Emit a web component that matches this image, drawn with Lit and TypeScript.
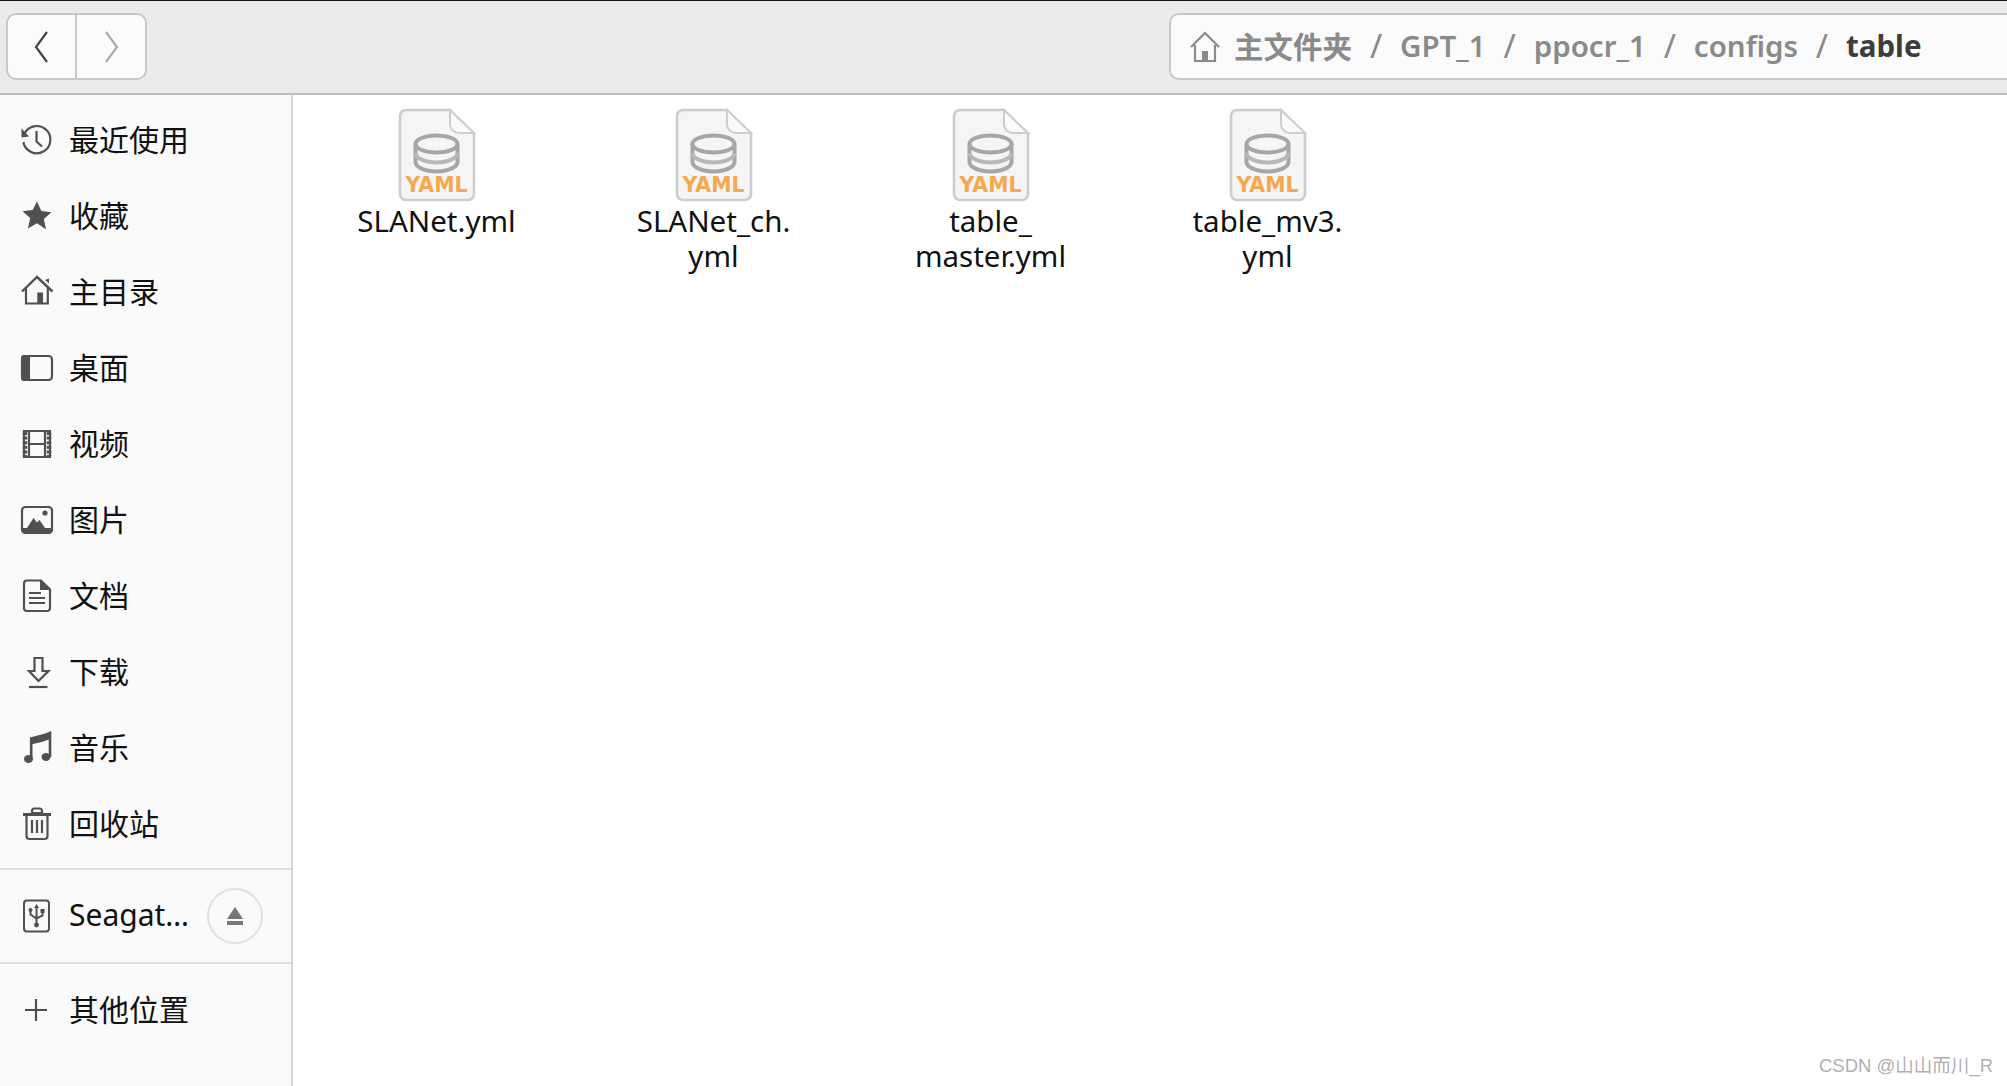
import { LitElement, html, css, svg } from "lit";
import { customElement } from "lit/decorators.js";

const C = "#505050";
const icons: Record<string, unknown> = {
  clock: svg`<path d="M5.2 12.500A13.600 13.600 0 1 1 4.400 20" fill="none" stroke="${C}" stroke-width="2.200"/><path d="M2.500 6.500 L10 14.500 L2.500 15.500Z" fill="${C}"/><path d="M17.500 9V19.500L23 24.500" fill="none" stroke="${C}" stroke-width="2.200"/>`,
  star: svg`<path d="M18 3.500l4.300 9.600 10.200 1.100-7.700 6.900 2.300 10.300L18 25.200 8.900 30.400l2.300-10.300-7.700-6.900 10.200-1.100z" fill="${C}"/>`,
  home: svg`<path d="M3 17.500L18 3l15.500 14.500" fill="none" stroke="${C}" stroke-width="2.400"/><path d="M7 14v15.500h21.800V14" fill="none" stroke="${C}" stroke-width="2.200"/><path d="M18.300 30V18.500h5.700V30z" fill="${C}"/><path d="M26 6l4-1.500v5z" fill="${C}"/>`,
  desk: svg`<rect x="3" y="6" width="30" height="24" rx="3.500" fill="none" stroke="${C}" stroke-width="2.200"/><path d="M5 5h6v26H5a3 3 0 0 1-3-3V8a3 3 0 0 1 3-3z" fill="${C}"/>`,
  video: svg`<path d="M5 5h26v26H5z" fill="none" stroke="${C}" stroke-width="2.200"/><path d="M10 5v26M26 5v26M10 18h16" fill="none" stroke="${C}" stroke-width="2.200"/><path d="M6 6v24M30 6v24" stroke="${C}" stroke-width="4.500" stroke-dasharray="3 1.600" fill="none"/>`,
  pic: svg`<rect x="3" y="5" width="30" height="26" rx="3.500" fill="none" stroke="${C}" stroke-width="2.200"/><path d="M4 26h28v3a3 3 0 0 1-3 3H7a3 3 0 0 1-3-3z" fill="${C}"/><path d="M8 26l6.500-10 3.500 4.500 2.500-2.500 5.500 8z" fill="${C}"/><circle cx="26" cy="11" r="2.600" fill="${C}"/>`,
  doc: svg`<path d="M8 2.500h14l9 9V30a3 3 0 0 1-3 3H8a3 3 0 0 1-3-3V5.500a3 3 0 0 1 3-3z" fill="none" stroke="${C}" stroke-width="2.200"/><path d="M21 2v10h10z" fill="${C}"/><path d="M10 15h12M10 20h16M10 25h16" stroke="${C}" stroke-width="2.200"/>`,
  down: svg`<path d="M15.500 4h8v13h6L19.500 27 10 17h5.500z" fill="none" stroke="${C}" stroke-width="2.200"/><path d="M10 33h18.500" stroke="${C}" stroke-width="2.200"/>`,
  music: svg`<ellipse cx="9.500" cy="29" rx="4.500" ry="4" fill="${C}"/><ellipse cx="27" cy="27" rx="4.500" ry="4" fill="${C}"/><path d="M12.200 29V8.500C19 7 25 5.500 31 3v24" fill="none" stroke="${C}" stroke-width="2.600"/><path d="M12 8.500C19 7 25 5.500 31 3v6c-6 2.500-12 4-19 5.500z" fill="${C}"/>`,
  trash: svg`<path d="M4 8.500h28" stroke="${C}" stroke-width="3"/><path d="M13 7V5a2.500 2.500 0 0 1 2.500-2.500h5A2.500 2.500 0 0 1 23 5v2z" fill="none" stroke="${C}" stroke-width="2.200"/><path d="M7.500 9v21a3 3 0 0 0 3 3h15a3 3 0 0 0 3-3V9" fill="none" stroke="${C}" stroke-width="2.200"/><path d="M13 14v13M18 14v13M23 14v13" stroke="${C}" stroke-width="2.200"/>`,
  usb: svg`<rect x="5" y="2.500" width="25" height="31" rx="3" fill="none" stroke="${C}" stroke-width="2"/><path d="M17.500 8v19M11.500 12v4.500l6 4 6-3V13" fill="none" stroke="${C}" stroke-width="2"/><circle cx="17.500" cy="27" r="2.400" fill="${C}"/><path d="M17.500 6l-2.500 4h5z" fill="${C}"/><circle cx="11.500" cy="12" r="2" fill="${C}"/><rect x="21.500" y="11" width="4" height="4" fill="${C}"/>`,
  plus: svg`<path d="M17 7v22M6 18h22" stroke="${C}" stroke-width="2.200"/>`,
};

const places: [string, string][] = [
  ["clock", "最近使用"], ["star", "收藏"], ["home", "主目录"], ["desk", "桌面"], ["video", "视频"],
  ["pic", "图片"], ["doc", "文档"], ["down", "下载"], ["music", "音乐"], ["trash", "回收站"],
];
const files = ["SLANet.yml", "SLANet_ch.\nyml", "table_\nmaster.yml", "table_mv3.\nyml"];
const crumbs = ["GPT_1", "ppocr_1", "configs"];

const icon = (n: string) => html`<svg class="ic" viewBox="0 0 36 36" width="36" height="36">${icons[n]}</svg>`;

const fileIcon = html`<svg class="file" viewBox="0 0 80 98" width="80" height="98">
  <path d="M9 6h44l24 24v60a6 6 0 0 1-6 6H9a6 6 0 0 1-6-6V12a6 6 0 0 1 6-6z" fill="#f5f5f5" stroke="#cdcdcd" stroke-width="2.600"/>
  <path d="M53 6v14a9 9 0 0 0 9 9h15z" fill="#fafafa" stroke="#cdcdcd" stroke-width="2"/>
  <g fill="none" stroke="#a6a6a6" stroke-width="4">
    <ellipse cx="39.500" cy="40" rx="21" ry="8.500"/>
    <path d="M18.500 40v18c0 5 9.500 9.500 21 9.500s21-4.500 21-9.500V40"/>
    <path d="M18.500 49c0 5 9.500 9.500 21 9.500s21-4.500 21-9.500" stroke="#b8b8b8"/>
  </g>
  <text class="yaml" x="39.500" y="88" text-anchor="middle" textLength="62" lengthAdjust="spacingAndGlyphs">YAML</text>
</svg>`;

@customElement("app-root")
export class AppRoot extends LitElement {
  static styles = css`
    :host { display: block; width: 2007px; height: 1086px; overflow: hidden; background: #fff;
      font-family: "Noto Sans", "Noto Sans CJK SC", sans-serif; color: #111; }
    .win { display: flex; flex-direction: column; height: 100%; border-top: 1px solid #111; box-sizing: border-box; }
    header { flex: none; height: 94px; box-sizing: border-box; background: #ebebeb; border-bottom: 2px solid #bebebe;
      display: flex; align-items: flex-start; padding: 12px 0 0 6px; }
    .nav { display: flex; width: 141px; height: 67px; box-sizing: border-box; border: 2px solid #c8c8c8; border-radius: 10px;
      background: #fbfbfb; overflow: hidden; flex: none; }
    .nav div { display: flex; align-items: center; justify-content: center; flex: 1; }
    .nav div + div { border-left: 2px solid #c8c8c8; padding-left: 2px; }
    .nav div:first-child { flex: none; width: 67px; }
    .path { margin-left: 1022px; flex: 1; height: 67px; box-sizing: border-box; border: 2px solid #c8c8c8; border-right: none;
      border-radius: 10px 0 0 10px; background: #fbfbfb; display: flex; align-items: center; padding: 0 0 2px 16px;
      font-size: 29.500px; font-weight: 600; color: #8a8a8a; }
    .path svg { flex: none; margin-right: 11px; }
    .sep { font-weight: 400; font-size: 33px; width: 72px; text-align: center; flex: none; margin: 0 -12px; }
    .cur { color: #3c3c3c; font-weight: 700; }
    .body { flex: 1; display: flex; min-height: 0; }
    aside { flex: none; width: 293px; box-sizing: border-box; background: #fafafa; border-right: 2px solid #d6d6d6; padding-top: 7px; }
    .row { height: 76px; display: flex; align-items: center; padding-left: 19px; font-size: 30px; gap: 14px; }
    .row .txt { padding-bottom: 5px; }
    .ic { flex: none; }
    hr { margin: 6px 0 0; border: 0; height: 2px; background: #e0e0e0; }
    .dev { height: 92px; justify-content: flex-start; }
    .dev .txt { flex: 1; padding-bottom: 3px; }
    .eject { flex: none; width: 56px; height: 56px; box-sizing: border-box; border-radius: 50%; border: 2px solid #e0e0e0;
      margin-right: 28px; display: flex; align-items: center; justify-content: center; }
    .other { margin-top: 8px; }
    .grid { flex: 1; display: grid; grid-template-columns: repeat(auto-fill, 277px); grid-auto-rows: min-content; padding: 9px 0 0 5px; }
    .item { display: flex; flex-direction: column; align-items: center; }
    .file { display: block; }
    .yaml { font: 700 21px "DejaVu Sans", sans-serif; fill: #f6a84e; }
    .label { font-size: 29.500px; line-height: 35px; text-align: center; white-space: pre-line; margin-top: 1px; }
    main { flex: 1; position: relative; display: flex; }
    .mark { position: absolute; right: 14px; bottom: 9px; font: 18.500px "Liberation Sans", "Noto Sans CJK SC", sans-serif; color: #b0b0b0; }
  `;

  render() {
    return html`<div class="win">
      <header>
        <div class="nav">
          <div><svg width="36" height="36" viewBox="0 0 36 36"><path d="M23 3L12 18l11 15" fill="none" stroke="#444" stroke-width="2.200"/></svg></div>
          <div><svg width="36" height="36" viewBox="0 0 36 36"><path d="M12 3l11 15-11 15" fill="none" stroke="#aaa" stroke-width="2.200"/></svg></div>
        </div>
        <div class="path">
          <svg viewBox="0 0 36 36" width="36" height="36"><path d="M4 19L18 5l14 14" fill="none" stroke="#8a8a8a" stroke-width="2.200"/><path d="M8 17v16h20V17" fill="none" stroke="#8a8a8a" stroke-width="2.200"/><path d="M15 33V23h6v10z" fill="#8a8a8a"/></svg>
          <span>主文件夹</span><span class="sep">/</span>
          ${crumbs.map((c) => html`<span>${c}</span><span class="sep">/</span>`)}
          <span class="cur">table</span>
        </div>
      </header>
      <div class="body">
        <aside>
          ${places.map(([i, t]) => html`<div class="row">${icon(i)}<span class="txt">${t}</span></div>`)}
          <hr />
          <div class="row dev">${icon("usb")}<span class="txt">Seagat…</span>
            <div class="eject"><svg width="20" height="20" viewBox="0 0 20 20"><path d="M10 1l8 12H2z M2 15h16v4H2z" fill="#777"/></svg></div>
          </div>
          <hr style="margin:0" />
          <div class="row other">${icon("plus")}<span class="txt">其他位置</span></div>
        </aside>
        <main>
          <div class="grid">
            ${files.map((f) => html`<div class="item">${fileIcon}<div class="label">${f}</div></div>`)}
          </div>
          <div class="mark">CSDN @山山而川_R</div>
        </main>
      </div>
    </div>`;
  }
}
